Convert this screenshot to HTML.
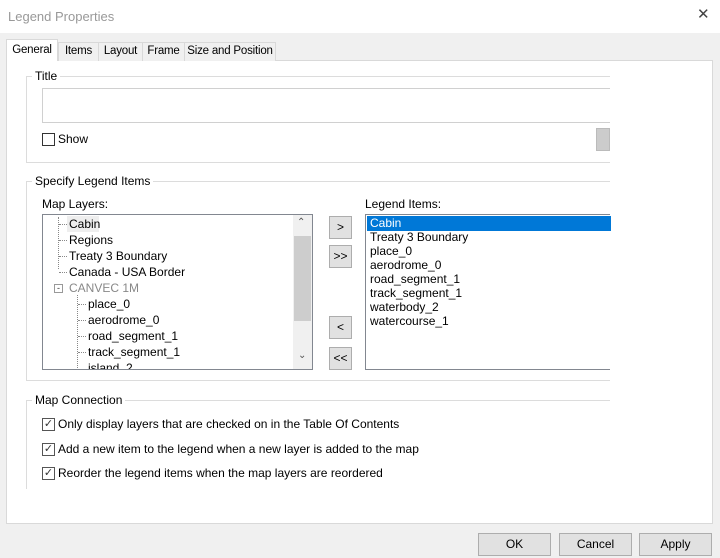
<!DOCTYPE html>
<html><head><style>
*{box-sizing:border-box;margin:0;padding:0}
body{width:720px;height:558px;background:#f0f0f0;font-family:"Liberation Sans",sans-serif;font-size:12px;color:#000;position:relative;overflow:hidden}
.a{position:absolute}
.tb{left:0;top:0;width:720px;height:33px;background:#fff}
.tab{position:absolute;top:42px;height:19px;border:1px solid #d9d9d9;border-bottom:none;background:#f0f0f0;text-align:center;line-height:17px;white-space:nowrap;font-size:11.5px;letter-spacing:-0.2px}
.panel{left:6px;top:60px;width:707px;height:464px;background:#fff;border:1px solid #d9d9d9}
.grp{position:absolute;border:1px solid #dcdcdc;border-right:none}
.lg{position:absolute;background:#fff;padding:0 3px;line-height:14px}
.cb{position:absolute;width:13px;height:13px;border:1px solid #333;background:#fff}
.btn{position:absolute;background:#e1e1e1;border:1px solid #adadad;text-align:center}
.li{position:absolute;white-space:nowrap;line-height:16px}
.h{position:absolute;width:8px;border-top:1px dotted #888}
</style></head><body>
<div class="a tb"></div>
<div class="a" style="left:8px;top:9px;color:#999;font-size:13px">Legend Properties</div>
<div class="a" style="left:697px;top:5px;font-size:15px;color:#444;font-weight:300">✕</div>
<div class="a panel"></div>
<div class="tab" style="left:58px;width:41px">Items</div>
<div class="tab" style="left:98px;width:45px">Layout</div>
<div class="tab" style="left:142px;width:43px">Frame</div>
<div class="tab" style="left:184px;width:92px">Size and Position</div>
<div class="tab" style="left:6px;top:39px;width:52px;height:22px;background:#fff;line-height:20px">General</div>

<div class="grp" style="left:26px;top:76px;width:584px;height:87px"></div>
<div class="lg" style="left:32px;top:69px">Title</div>
<div class="a" style="left:42px;top:88px;width:568px;height:35px;border:1px solid #d0d0d0;border-right:none"></div>
<div class="cb" style="left:42px;top:133px"></div>
<div class="a" style="left:58px;top:132px">Show</div>
<div class="a" style="left:596px;top:128px;width:14px;height:23px;background:#ccc;border:1px solid #bbb"></div>

<div class="grp" style="left:26px;top:181px;width:584px;height:200px"></div>
<div class="lg" style="left:32px;top:174px">Specify Legend Items</div>
<div class="a" style="left:42px;top:197px">Map Layers:</div>
<div class="a" style="left:42px;top:214px;width:271px;height:156px;border:1px solid #828790;background:#fff;overflow:hidden">
 <div class="a" style="left:250px;top:0;width:19px;height:154px;background:#f0f0f0"></div>
 <div class="a" style="left:251px;top:21px;width:17px;height:85px;background:#cdcdcd"></div>
 <div class="a" style="left:254px;top:2px;font-size:10px;color:#555">⌃</div>
 <div class="a" style="left:255px;top:135px;font-size:10px;color:#555">⌄</div>
 <div class="a" style="left:15px;top:2px;height:52px;border-left:1px dotted #888"></div>
 <div class="a" style="left:34px;top:80px;height:75px;border-left:1px dotted #888"></div>
 <div class="h" style="left:16px;top:9px"></div>
 <div class="h" style="left:16px;top:25px"></div>
 <div class="h" style="left:16px;top:41px"></div>
 <div class="h" style="left:16px;top:57px"></div>
 <div class="h" style="left:35px;top:89px"></div>
 <div class="h" style="left:35px;top:105px"></div>
 <div class="h" style="left:35px;top:121px"></div>
 <div class="h" style="left:35px;top:137px"></div>
 <div class="a" style="left:24px;top:1px;width:32px;height:16px;background:#eee"></div>
 <div class="li" style="left:26px;top:1px">Cabin</div>
 <div class="li" style="left:26px;top:17px">Regions</div>
 <div class="li" style="left:26px;top:33px">Treaty 3 Boundary</div>
 <div class="li" style="left:26px;top:49px">Canada - USA Border</div>
 <div class="a" style="left:11px;top:69px;width:9px;height:9px;border:1px solid #999;background:#fff;font-size:9px;line-height:6px;text-align:center;color:#333">-</div>
 <div class="li" style="left:26px;top:65px;color:#888">CANVEC 1M</div>
 <div class="li" style="left:45px;top:81px">place_0</div>
 <div class="li" style="left:45px;top:97px">aerodrome_0</div>
 <div class="li" style="left:45px;top:113px">road_segment_1</div>
 <div class="li" style="left:45px;top:129px">track_segment_1</div>
 <div class="li" style="left:45px;top:145px">island_2</div>
</div>
<div class="btn" style="left:329px;top:216px;width:23px;height:23px;line-height:21px">&gt;</div>
<div class="btn" style="left:329px;top:245px;width:23px;height:23px;line-height:21px">&gt;&gt;</div>
<div class="btn" style="left:329px;top:316px;width:23px;height:23px;line-height:21px">&lt;</div>
<div class="btn" style="left:329px;top:347px;width:23px;height:23px;line-height:21px">&lt;&lt;</div>
<div class="a" style="left:365px;top:197px">Legend Items:</div>
<div class="a" style="left:365px;top:214px;width:245px;height:156px;border:1px solid #828790;border-right:none;background:#fff">
 <div class="a" style="left:1px;top:1px;width:244px;height:15px;background:#0078d7"></div>
 <div class="li" style="left:4px;top:1px;line-height:14px;color:#fff">Cabin</div>
 <div class="li" style="left:4px;top:15px;line-height:14px">Treaty 3 Boundary</div>
 <div class="li" style="left:4px;top:29px;line-height:14px">place_0</div>
 <div class="li" style="left:4px;top:43px;line-height:14px">aerodrome_0</div>
 <div class="li" style="left:4px;top:57px;line-height:14px">road_segment_1</div>
 <div class="li" style="left:4px;top:71px;line-height:14px">track_segment_1</div>
 <div class="li" style="left:4px;top:85px;line-height:14px">waterbody_2</div>
 <div class="li" style="left:4px;top:99px;line-height:14px">watercourse_1</div>
</div>

<div class="grp" style="left:26px;top:400px;width:584px;height:89px;border-bottom:none"></div>
<div class="lg" style="left:32px;top:393px">Map Connection</div>
<div class="cb" style="left:42px;top:418px;font-size:11px;line-height:11px;text-align:center;color:#333;border-color:#555">✓</div>
<div class="a" style="left:58px;top:417px">Only display layers that are checked on in the Table Of Contents</div>
<div class="cb" style="left:42px;top:443px;font-size:11px;line-height:11px;text-align:center;color:#333;border-color:#555">✓</div>
<div class="a" style="left:58px;top:442px">Add a new item to the legend when a new layer is added to the map</div>
<div class="cb" style="left:42px;top:467px;font-size:11px;line-height:11px;text-align:center;color:#333;border-color:#555">✓</div>
<div class="a" style="left:58px;top:466px">Reorder the legend items when the map layers are reordered</div>

<div class="btn" style="left:478px;top:533px;width:73px;height:23px;line-height:21px">OK</div>
<div class="btn" style="left:559px;top:533px;width:73px;height:23px;line-height:21px">Cancel</div>
<div class="btn" style="left:639px;top:533px;width:73px;height:23px;line-height:21px">Apply</div>
</body></html>
